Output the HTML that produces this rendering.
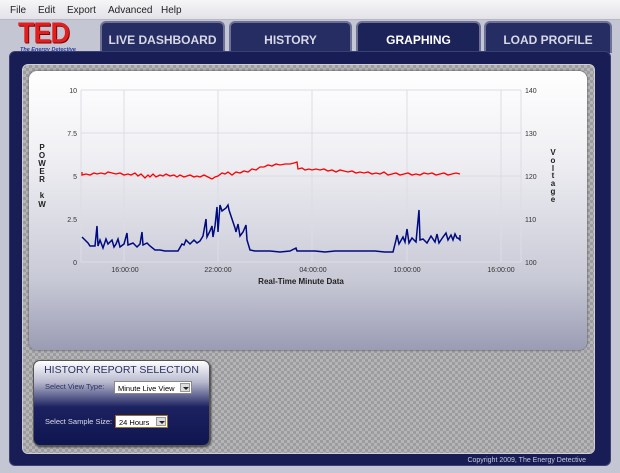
<!DOCTYPE html>
<html><head><meta charset="utf-8"><style>
*{margin:0;padding:0;box-sizing:border-box}
body{width:620px;height:473px;overflow:hidden;background:#c4c6d4;font-family:"Liberation Sans",sans-serif;position:relative}
.menu{position:absolute;left:0;top:0;width:620px;height:20px;background:linear-gradient(#f6f6f8,#e2e2e8);border-bottom:1px solid #b8b8c4;font-size:10px;color:#222}
.menu span{position:absolute;top:5px}
.logo{position:absolute;left:17px;top:20px;width:54px;height:32px}
.logo b{position:absolute;left:1px;top:-2px;font:900 27px "Liberation Sans",sans-serif;color:#e02020;letter-spacing:-1px;text-shadow:1px 1px 0 #800;transform:scaleY(1.05)}
.logo i{position:absolute;left:3px;top:27px;font-size:5.5px;color:#2a3aa0;white-space:nowrap;font-weight:bold}
.tab{position:absolute;top:21px;height:32px;background:#262d62;border:2px solid #6d7196;border-bottom:none;border-radius:6px 6px 0 0;color:#d8d8e6;font-weight:bold;font-size:12px;text-align:center;line-height:34px}
.tab.act{background:#1c2358;color:#fff}
.panel{position:absolute;left:9px;top:51px;width:602px;height:415px;background:#181e55;border-radius:6px;border:1px solid #3a4070}
.check{position:absolute;left:22px;top:64px;width:573px;height:390px;border-radius:6px;background-color:#a3a3a6;background-image:repeating-conic-gradient(#b5b5b8 0 25%,#9c9c9f 0 50%);background-size:6px 6px;border:1px solid #d0d0d4}
.chart{position:absolute;left:29px;top:71px;width:558px;height:279px;border-radius:8px;background:linear-gradient(#ffffff 0%,#f0f0f4 30%,#c8c9d6 75%,#9a9cb4 100%);box-shadow:0 0 2px #444}
.sel{position:absolute;left:33px;top:360px;width:177px;height:86px;border-radius:7px;background:linear-gradient(#ffffff 0%,#b8b9ce 25%,#1c2260 55%,#0f1550 100%);border:1px solid #555;box-shadow:1px 1px 2px #333}
.sel h4{position:absolute;left:0;width:100%;top:3px;text-align:center;font-weight:normal;font-size:10.5px;color:#2b3266}
.lbl{position:absolute;font-size:7.5px}
.dd{position:absolute;background:#fff;border:1px solid #888;font-size:7.5px;padding:2px 3px;height:13px}
.dd s{position:absolute;right:1px;top:1px;width:10px;height:9px;background:#ddd;border:1px solid #999;text-decoration:none}
.dd s:after{content:"";position:absolute;left:2px;top:3px;border:3px solid transparent;border-top:3px solid #222}
.copy{position:absolute;right:34px;top:457px;font-size:7px;color:#c8cae0}
</style></head><body>
<div class="menu"><span style="left:10px">File</span><span style="left:38px">Edit</span><span style="left:67px">Export</span><span style="left:108px">Advanced</span><span style="left:161px">Help</span></div>
<div class="logo"><b>TED</b><i>The Energy Detective</i></div>
<div class="tab" style="left:100px;width:125px">LIVE DASHBOARD</div>
<div class="tab" style="left:229px;width:123px">HISTORY</div>
<div class="tab act" style="left:356px;width:125px;height:33px">GRAPHING</div>
<div class="tab" style="left:484px;width:128px">LOAD PROFILE</div>
<div class="panel"></div>
<div class="check"></div>
<div class="chart"></div>
<svg style="position:absolute;left:0;top:0" width="620" height="473" font-family="Liberation Sans,sans-serif">
<g stroke="#dcdce4" stroke-width="1">
<line x1="81" y1="90" x2="521" y2="90"/><line x1="81" y1="133" x2="521" y2="133"/><line x1="81" y1="176" x2="521" y2="176"/><line x1="81" y1="219" x2="521" y2="219"/><line x1="81" y1="262" x2="521" y2="262"/>
<line x1="81" y1="90" x2="81" y2="262"/><line x1="124" y1="90" x2="124" y2="262"/><line x1="218" y1="90" x2="218" y2="262"/><line x1="312" y1="90" x2="312" y2="262"/><line x1="407" y1="90" x2="407" y2="262"/><line x1="501" y1="90" x2="501" y2="262"/><line x1="521" y1="90" x2="521" y2="262"/>
</g>
<g font-size="7" fill="#333" text-anchor="end"><text x="77" y="93">10</text><text x="77" y="136">7.5</text><text x="77" y="179">5</text><text x="77" y="222">2.5</text><text x="77" y="265">0</text></g>
<g font-size="7" fill="#333"><text x="525" y="93">140</text><text x="525" y="136">130</text><text x="525" y="179">120</text><text x="525" y="222">110</text><text x="525" y="265">100</text></g>
<g font-size="7" fill="#333" text-anchor="middle"><text x="125" y="272">16:00:00</text><text x="218" y="272">22:00:00</text><text x="313" y="272">04:00:00</text><text x="407" y="272">10:00:00</text><text x="501" y="272">16:00:00</text></g>
<text x="301" y="284" font-size="8" font-weight="bold" text-anchor="middle" fill="#222">Real-Time Minute Data</text>
<g font-size="8" font-weight="bold" fill="#222" text-anchor="middle"><text x="42" y="150">P</text><text x="42" y="158">O</text><text x="42" y="166">W</text><text x="42" y="174">E</text><text x="42" y="182">R</text><text x="42" y="198">k</text><text x="42" y="207">W</text>
<text x="553" y="155">V</text><text x="553" y="163">o</text><text x="553" y="171">l</text><text x="553" y="178">t</text><text x="553" y="186">a</text><text x="553" y="194">g</text><text x="553" y="202">e</text></g>
<polyline fill="none" stroke="#f00" stroke-width="1.3" points="82,172 82,175 86,174 90,175 94,173 97,174 101,173 105,174 108,172 112,173 116,174 120,173 124,175 128,174 131,175 135,173 138,176 141,174 145,178 148,175 150,177 153,174 156,177 160,175 163,176 166,174 170,176 174,175 177,177 180,175 184,177 187,176 190,175 194,177 197,176 200,177 204,175 208,177 212,179 215,177 218,176 222,173 225,174 228,172 232,175 236,172 240,173 244,171 248,172 252,169 256,170 260,167 264,167 268,165 272,166 276,164 280,165 285,164 290,164 294,163 297,162 298,169 302,168 305,170 309,169 312,170 316,169 320,170 324,169 328,171 332,170 336,172 340,170 344,171 348,172 352,171 356,173 360,172 364,173 368,172 372,174 376,173 380,174 384,172 388,175 392,174 396,173 400,175 404,174 408,173 412,175 416,174 420,175 424,173 428,174 432,173 436,175 440,174 444,173 448,175 452,174 456,173 460,174"/>
<polyline fill="none" stroke="#000a80" stroke-width="1.5" points="82,237 85,240 88,243 90,246 95,246 97,226 98,246 100,240 103,248 106,239 108,244 112,240 114,247 116,244 118,239 120,247 124,244 127,233 128,245 133,243 137,247 140,244 142,232 143,245 147,243 150,246 155,250 160,250 165,251 170,251 178,251 182,244 184,245 186,240 190,244 194,240 197,243 200,241 203,236 206,219 207,237 210,231 212,226 213,237 215,226 217,207 218,232 220,205 222,211 226,208 228,205 229,210 233,222 235,228 236,232 238,224 240,236 243,232 246,225 247,240 250,250 255,251 260,251 270,251 280,252 290,251 296,248 297,251 305,251 315,251 325,252 335,251 345,251 355,251 365,251 375,251 385,252 393,252 396,240 397,235 399,244 403,237 405,242 407,229 409,243 412,238 416,242 419,210 420,240 423,239 427,243 431,236 433,239 435,242 437,234 439,243 443,237 446,233 448,240 451,235 453,240 455,234 457,238 458,238 460,240 460,235"/>
</svg>
<div class="sel"><h4>HISTORY REPORT SELECTION</h4>
<div class="lbl" style="left:11px;top:21px;color:#2b3266">Select View Type:</div>
<div class="dd" style="left:80px;top:20px;width:78px">Minute Live View<s></s></div>
<div class="lbl" style="left:11px;top:56px;color:#dde">Select Sample Size:</div>
<div class="dd" style="left:81px;top:54px;width:53px;border:1px solid #a07020">24 Hours<s></s></div>
</div>
<div class="copy">Copyright 2009, The Energy Detective</div>
</body></html>
